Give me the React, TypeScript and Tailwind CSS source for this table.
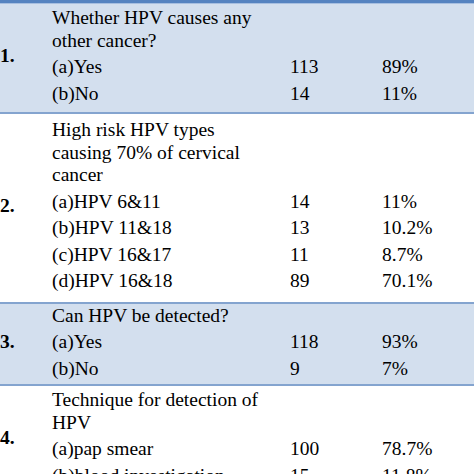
import React from "react";

type Row = {
  n: string;
  blue: boolean;
  pad: string;
  q: string;
  opts: [string, string, string][];
};

const rows: Row[] = [
  {
    n: "1.",
    blue: true,
    pad: "pt-[3px] pb-[7px]",
    q: "Whether HPV causes any other cancer?",
    opts: [
      ["(a)Yes", "113", "89%"],
      ["(b)No", "14", "11%"],
    ],
  },
  {
    n: "2.",
    blue: false,
    pad: "pt-[5px] pb-[9px]",
    q: "High risk HPV types causing 70% of cervical cancer",
    opts: [
      ["(a)HPV 6&11", "14", "11%"],
      ["(b)HPV 11&18", "13", "10.2%"],
      ["(c)HPV 16&17", "11", "8.7%"],
      ["(d)HPV 16&18", "89", "70.1%"],
    ],
  },
  {
    n: "3.",
    blue: true,
    pad: "pt-[1px] pb-[4px]",
    q: "Can HPV be detected?",
    opts: [
      ["(a)Yes", "118", "93%"],
      ["(b)No", "9", "7%"],
    ],
  },
  {
    n: "4.",
    blue: false,
    pad: "pt-[3px] pb-[10px]",
    q: "Technique for detection of HPV",
    opts: [
      ["(a)pap smear", "100", "78.7%"],
      ["(b)blood investigation", "15", "11.8%"],
    ],
  },
];

function RowView({ r }: { r: Row }) {
  return (
    <div
      className={`flex items-center ${r.pad} ${
        r.blue ? "bg-[#d3dfee]" : "bg-white"
      }`}
    >
      <div className="w-[52px] shrink-0 font-bold">{r.n}</div>
      <div className="flex flex-col gap-[4px] flex-1">
        <div className="w-[216px]">{r.q}</div>
        {r.opts.map((o, i) => (
          <div key={i} className="grid grid-cols-[238px_92px_1fr]">
            <div className="whitespace-nowrap">{o[0]}</div>
            <div>{o[1]}</div>
            <div>{o[2]}</div>
          </div>
        ))}
      </div>
    </div>
  );
}

export default function App() {
  return (
    <div
      className="w-[474px] h-[474px] overflow-hidden bg-white text-[19.5px] leading-[22.5px] text-black"
      style={{ fontFamily: '"Liberation Serif", "Times New Roman", serif' }}
    >
      <div className="h-[3px] bg-[#5583c0]" />
      <div className="h-[1px] bg-[#a7bfe0]" />
      {rows.map((r, i) => (
        <React.Fragment key={i}>
          {i > 0 && <div className="h-[2px] bg-[#84a4cf]" />}
          <RowView r={r} />
        </React.Fragment>
      ))}
    </div>
  );
}
